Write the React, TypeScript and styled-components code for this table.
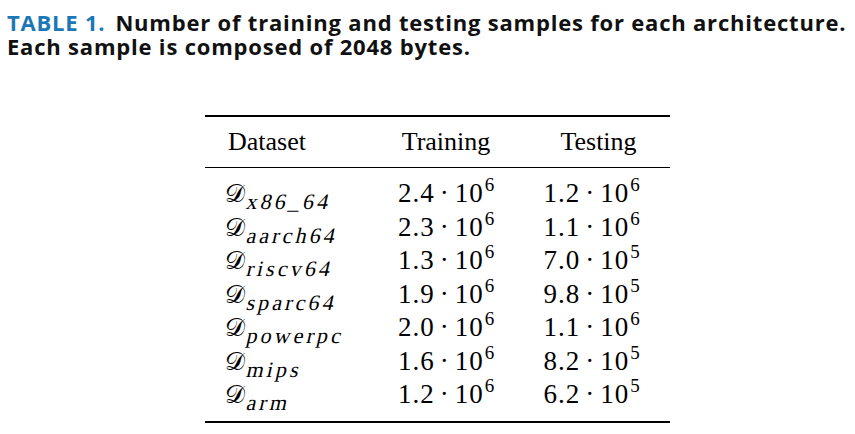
import React from "react";
import styled, { createGlobalStyle } from "styled-components";

const Global = createGlobalStyle`
  html, body { margin: 0; padding: 0; background: #ffffff; }
  body { width: 855px; height: 434px; overflow: hidden; }
`;

const Page = styled.div`
  width: 855px;
  height: 434px;
  background: #fff;
  display: flex;
  flex-direction: column;
`;

const Caption = styled.p`
  margin: 0;
  padding: 10px 0 0 7px;
  font-family: "Open Sans", "Noto Sans", sans-serif;
  font-weight: 700;
  font-size: 22px;
  line-height: 24px;
  color: #111;
  letter-spacing: 0.8px;
  white-space: nowrap;
`;

const Label = styled.span`
  color: #1a78b6;
  margin-right: 10px;
`;

const Table = styled.div`
  margin: 57px 0 0 205px;
  width: 465px;
  display: grid;
  grid-template-columns: 160px 162px 143px;
  border-top: 2px solid #000;
  border-bottom: 2px solid #000;
  font-family: "Liberation Serif", "Times New Roman", serif;
  color: #000;
`;

const HeadCell = styled.div<{ $align: "left" | "center" }>`
  height: 50px;
  line-height: 50px;
  font-size: 26px;
  text-align: ${(p) => p.$align};
  padding-left: ${(p) => (p.$align === "left" ? "23px" : "0")};
  border-bottom: 1.5px solid #000;
`;

const Body = styled.div`
  grid-column: 1 / -1;
  display: grid;
  grid-template-columns: 160px 162px 143px;
  grid-auto-rows: 33.5px;
  padding: 9px 0 9px;
`;

const NameCell = styled.div`
  padding-left: 20px;
  line-height: 33.5px;
  white-space: nowrap;
`;

const Cal = styled.span`
  font-family: "DejaVu Serif", "DejaVu Sans", serif;
  font-size: 25px;
  font-style: normal;
`;

const Sub = styled.sub`
  display: inline-block;
  font-family: "Liberation Serif", serif;
  font-style: normal;
  font-size: 22px;
  letter-spacing: 3.1px;
  line-height: 0;
  vertical-align: -7px;
  margin-left: 2px;
  transform: skewX(-13deg);
`;

const NumCell = styled.div<{ $shift?: number }>`
  text-align: center;
  line-height: 33.5px;
  font-size: 27px;
  letter-spacing: 1px;
  white-space: nowrap;
  padding-right: ${(p) => p.$shift ?? 0}px;
`;

const Dot = styled.span`
  margin: 0 5px;
`;

const Sup = styled.sup`
  font-size: 19px;
  line-height: 0;
  vertical-align: 11px;
  margin-left: 1px;
  letter-spacing: 0;
`;

type Row = { arch: string; train: [string, string]; test: [string, string] };

const rows: Row[] = [
  { arch: "x86_64", train: ["2.4", "6"], test: ["1.2", "6"] },
  { arch: "aarch64", train: ["2.3", "6"], test: ["1.1", "6"] },
  { arch: "riscv64", train: ["1.3", "6"], test: ["7.0", "5"] },
  { arch: "sparc64", train: ["1.9", "6"], test: ["9.8", "5"] },
  { arch: "powerpc", train: ["2.0", "6"], test: ["1.1", "6"] },
  { arch: "mips", train: ["1.6", "6"], test: ["8.2", "5"] },
  { arch: "arm", train: ["1.2", "6"], test: ["6.2", "5"] },
];

const Num: React.FC<{ v: [string, string]; shift?: number }> = ({ v, shift }) => (
  <NumCell $shift={shift}>
    {v[0]}
    <Dot>·</Dot>
    10
    <Sup>{v[1]}</Sup>
  </NumCell>
);

export default function App() {
  return (
    <Page>
      <Global />
      <Caption>
        <Label>TABLE 1.</Label>
        Number of training and testing samples for each architecture.
        <br />
        Each sample is composed of 2048 bytes.
      </Caption>
      <Table>
        <HeadCell $align="left">Dataset</HeadCell>
        <HeadCell $align="center">Training</HeadCell>
        <HeadCell $align="center">Testing</HeadCell>
        <Body>
          {rows.map((r) => (
            <React.Fragment key={r.arch}>
              <NameCell>
                <Cal>𝒟</Cal>
                <Sub>{r.arch}</Sub>
              </NameCell>
              <Num v={r.train} />
              <Num v={r.test} shift={14} />
            </React.Fragment>
          ))}
        </Body>
      </Table>
    </Page>
  );
}
